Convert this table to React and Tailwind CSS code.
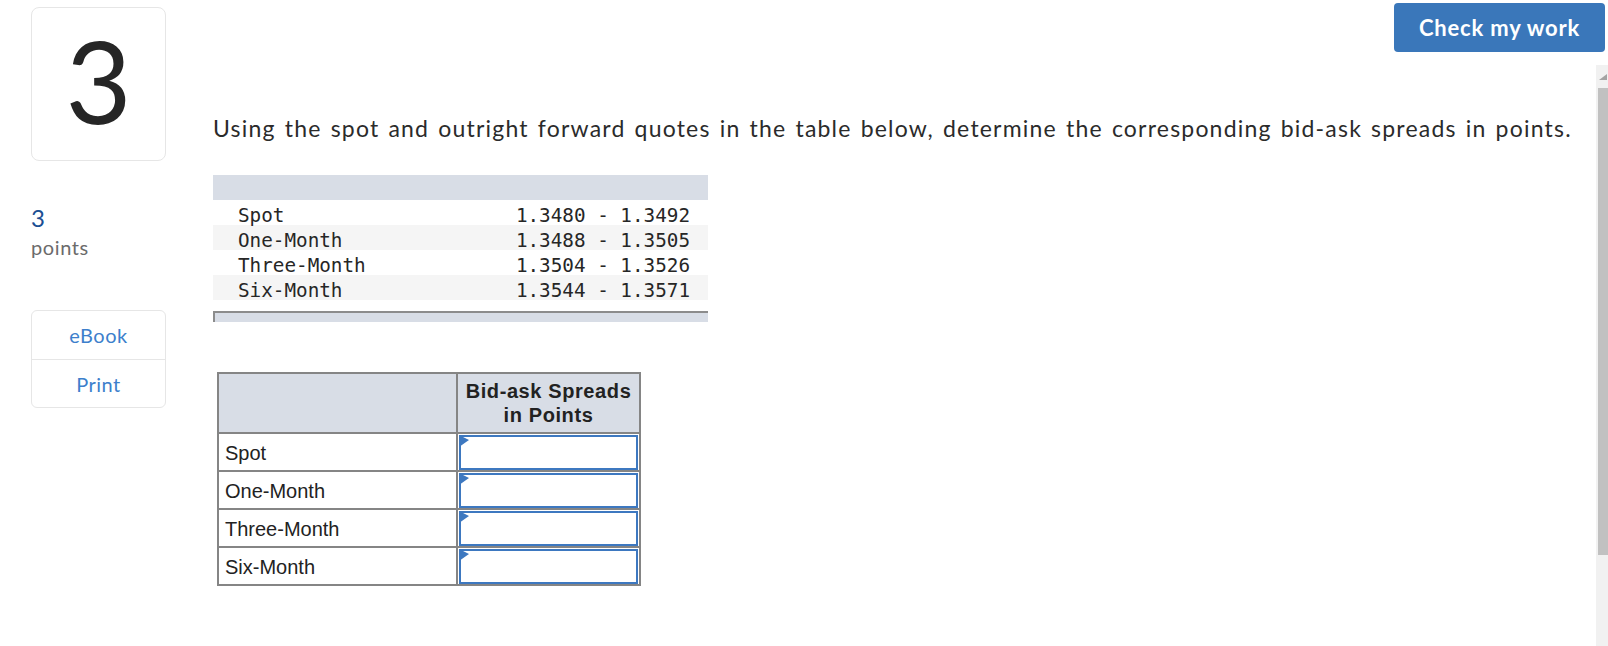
const quotes = [
  { label: "Spot", value: "1.3480 - 1.3492" },
  { label: "One-Month", value: "1.3488 - 1.3505" },
  { label: "Three-Month", value: "1.3504 - 1.3526" },
  { label: "Six-Month", value: "1.3544 - 1.3571" },
];

const AnswerInput = () => (
  <div className="relative h-[35px] mx-[1px] border-2 border-[#3d78c0] bg-white">
    {/* little blue flag in the corner */}
    <svg className="absolute -left-[2px] -top-[2px]" width="10" height="12" viewBox="0 0 10 12">
      <polygon points="0,0 10,5 0,12" fill="#3d78c0" />
    </svg>
  </div>
);

const App = () => {
  return (
    <div className="w-[1608px] h-[646px] bg-white flex overflow-hidden" style={{ fontFamily: "Lato, 'Open Sans', sans-serif" }}>
      {/* Sidebar */}
      <div className="w-[200px] shrink-0 pl-[31px] pt-[7px]">
        <div className="w-[135px] h-[154px] border border-[#e6e6e6] rounded-lg flex items-center justify-center">
          <span className="text-[114px] font-normal leading-none text-[#262626] -mt-[8px]">3</span>
        </div>

        <div className="mt-[42px] text-[24px] leading-[30px] text-[#1b4f93]">3</div>
        <div className="mt-[2px] text-[20px] leading-[24px] tracking-[0.6px] text-[#6b6b6b]">points</div>

        <div className="mt-[51px] w-[135px] border border-[#e6e6e6] rounded-md text-[20px] tracking-[0.5px] text-[#3d7fcc]">
          <div className="h-[49px] flex items-center justify-center border-b border-[#e6e6e6]">eBook</div>
          <div className="h-[47px] flex items-center justify-center">Print</div>
        </div>
      </div>

      {/* Main */}
      <div className="flex-1 flex flex-col">
        <div className="h-[65px] shrink-0 flex justify-end items-start pt-[3px] pr-[3px]">
          <button className="w-[211px] h-[49px] bg-[#3a77ba] rounded text-white font-bold text-[22px] tracking-[0.8px]">
            Check my work
          </button>
        </div>

        <div className="flex-1 flex">
          <div className="flex-1 pl-[13px] pt-[49px]">
            <p className="text-[23px] leading-[28px] tracking-[1.2px] [word-spacing:2px] text-[#2b2b2b] whitespace-nowrap">
              Using the spot and outright forward quotes in the table below, determine the corresponding bid-ask spreads in points.
            </p>

            {/* Quote table */}
            <div className="mt-[33px] w-[495px]" style={{ fontFamily: "'DejaVu Sans Mono', monospace" }}>
              <div className="h-[25px] bg-[#d8dde6]" />
              {quotes.map((q, i) => (
                <div
                  key={q.label}
                  className={`h-[25px] flex items-center justify-between pl-[25px] pr-[18px] pt-[6px] leading-[19px] text-[19.3px] text-[#262626] ${i % 2 === 1 ? "bg-[#f5f5f5]" : "bg-white"}`}
                >
                  <span>{q.label}</span>
                  <span>{q.value}</span>
                </div>
              ))}
              <div className="mt-[11px] h-[11px] bg-[#d8dde6] border-t-2 border-l-2 border-[#8c8c8c]" />
            </div>

            {/* Answer table */}
            <table
              className="mt-[50px] ml-[4px] border-collapse border-2 border-[#858585] text-[20px] text-[#222]"
              style={{ fontFamily: "'Liberation Sans', Arial, sans-serif" }}
            >
              <thead>
                <tr className="h-[60px] bg-[#d8dde6]">
                  <th className="w-[239px] border-2 border-[#858585]" />
                  <th className="w-[183px] border-2 border-[#858585] font-bold leading-[24px] text-[20px] tracking-[0.6px] align-middle">
                    Bid-ask Spreads
                    <br />
                    in Points
                  </th>
                </tr>
              </thead>
              <tbody>
                {quotes.map((q) => (
                  <tr key={q.label} className="h-[38px]">
                    <td className="border-2 border-[#858585] pl-[6px] pt-[2px]">{q.label}</td>
                    <td className="border-2 border-[#858585] p-0">
                      <AnswerInput />
                    </td>
                  </tr>
                ))}
              </tbody>
            </table>
          </div>

          {/* Scrollbar */}
          <div className="w-[12px] shrink-0 bg-[#f1f1f1] flex flex-col items-end">
            <div className="h-[23px] w-full flex items-center justify-end pr-[1px]">
              <svg width="8" height="6" viewBox="0 0 8 6">
                <polygon points="8,0 8,6 0,6" fill="#a3a3a3" />
              </svg>
            </div>
            <div className="w-[10px] h-[467px] bg-[#c1c1c1]" />
          </div>
        </div>
      </div>
    </div>
  );
};

export default App;
